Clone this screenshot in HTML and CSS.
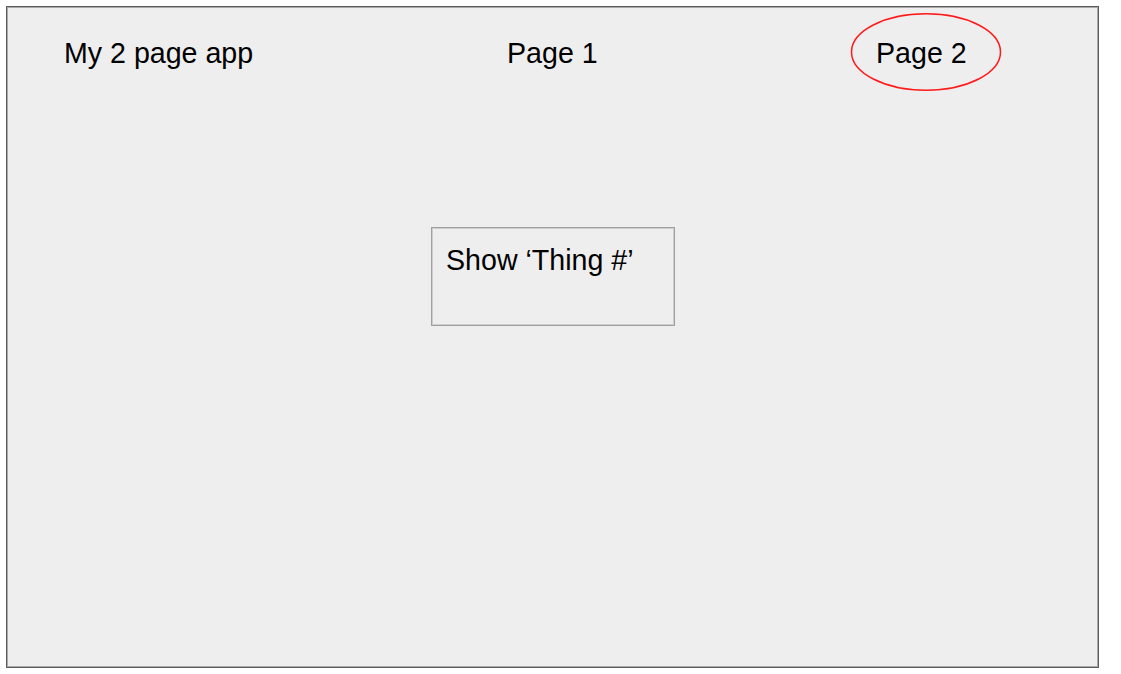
FILE: index.html
```html
<!DOCTYPE html>
<html>
<head>
<meta charset="utf-8">
<link rel="stylesheet" href="styles.css">
</head>
<body>
<div class="frame">
  <header class="nav">
    <div class="nav-item">My 2 page app</div>
    <div class="nav-item">Page 1</div>
    <div class="nav-item current">Page 2
      <svg class="circle" width="154" height="82" viewBox="0 0 154 82"><ellipse cx="77" cy="41" rx="74.5" ry="38.2" fill="none" stroke="#ff1a1a" stroke-width="1.5"/></svg>
    </div>
  </header>
  <main class="content">
    <div class="thing-box">Show ‘Thing #’</div>
  </main>
</div>
</body>
</html>
```
FILE: styles.css
```css
html, body {
  margin: 0;
  background: #ffffff;
}
body {
  padding: 6px;
  font-family: "Liberation Sans", Arial, sans-serif;
  color: #000;
}
.frame {
  box-sizing: border-box;
  width: 1093px;
  height: 662px;
  background: #eeeeee;
  border: 1px solid #5c5c5c;
  box-shadow: inset 0 0 0 1px #a9a9a9;
  padding-top: 30px;
}
.nav {
  display: grid;
  grid-template-columns: 443px 369px auto;
  padding-left: 57px;
  font-size: 28.6px;
  line-height: 32px;
}
.nav-item {
  position: relative;
  white-space: nowrap;
}
.circle {
  position: absolute;
  left: -27px;
  top: -26px;
}
.content {
  display: flex;
  justify-content: center;
  padding-top: 158px;
  padding-left: 1px;
}
.thing-box {
  box-sizing: border-box;
  width: 244px;
  height: 99px;
  border: 1px solid #a0a0a0;
  box-shadow: inset 0 0 0 1px #cdcdcd;
  padding: 16px 0 0 14px;
  font-size: 28.6px;
  line-height: 32px;
}
```
